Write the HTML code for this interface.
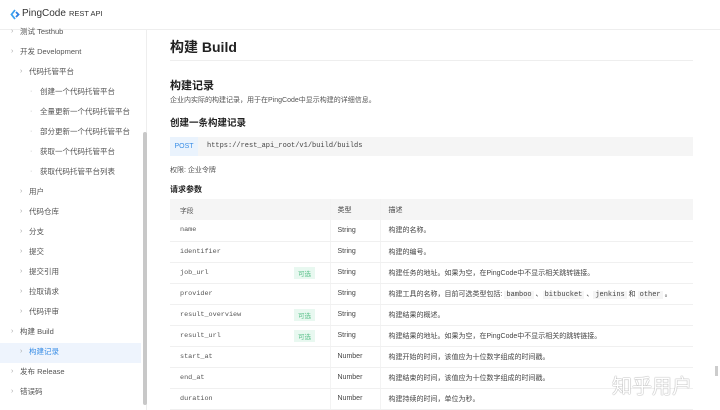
<!DOCTYPE html>
<html><head><meta charset="utf-8"><style>
*{margin:0;padding:0;box-sizing:border-box}
body{width:720px;height:410px;overflow:hidden;background:#fff;font-family:"Liberation Sans","Noto Sans CJK SC",sans-serif;color:#333;position:relative}
.hdr{position:absolute;left:0;top:0;width:720px;height:30px;border-bottom:1px solid #eee;background:#fff}
.side{position:absolute;left:0;top:30px;width:147px;height:380px;border-right:1px solid #eee}
.it{position:absolute;font-size:7.5px;color:#555;white-space:nowrap;line-height:20px;height:20px}
.it:before{content:"›";position:absolute;left:-9px;color:#aaa;font-size:7px}
.dot:before{content:"·";left:-10px}
.mono{font-family:"Liberation Mono",monospace}
.a{position:absolute;white-space:nowrap}
table{position:absolute;left:170px;top:199px;width:523px;border-collapse:collapse;font-size:7px}
td{height:21px;border-bottom:1px solid #f0f0f0;padding-left:10px;color:#444;white-space:nowrap;vertical-align:middle}
td+td{border-left:1px solid #f3f3f3}
tr:first-child td{background:#f5f5f5;height:21px;border-bottom:none}
tr td:first-child{font-family:"Liberation Mono",monospace;font-size:6.8px;color:#555;position:relative}
.opt{position:absolute;left:124px;top:4px;background:#e8f8f0;color:#5ac08a;font-size:6.5px;padding:1px 4px;font-family:"Noto Sans CJK SC",sans-serif}
code{font-family:"Liberation Mono",monospace;background:#f5f5f5;padding:0 2px;font-size:7px}
</style></head><body>
<div class="hdr">
<svg class="a" style="left:10px;top:9px" width="10" height="11" viewBox="0 0 10 11"><path d="M5 1L1.5 5.5 5 10" stroke="#3aa0f0" stroke-width="1.8" fill="none"/><path d="M6 3l2.5 2.5L6 8" stroke="#2d7fe0" stroke-width="1.8" fill="none"/></svg>
<div class="a" style="left:22px;top:8px;font-size:10px;color:#333">PingCode</div>
<div class="a" style="left:69px;top:9px;font-size:7.5px;color:#333">REST API</div>
</div>
<div class="side">
<div class="a" style="left:0;top:313px;width:141px;height:20px;background:#eef4fd"></div>
<div class="a" style="left:143px;top:102px;width:4px;height:273px;background:#c8c8c8;border-radius:2px"></div>
</div>
<div class="it" style="left:20px;top:22px">测试 Testhub</div>
<div class="it" style="left:20px;top:42px">开发 Development</div>
<div class="it" style="left:29px;top:62px">代码托管平台</div>
<div class="it dot" style="left:40px;top:82px">创建一个代码托管平台</div>
<div class="it dot" style="left:40px;top:102px">全量更新一个代码托管平台</div>
<div class="it dot" style="left:40px;top:122px">部分更新一个代码托管平台</div>
<div class="it dot" style="left:40px;top:142px">获取一个代码托管平台</div>
<div class="it dot" style="left:40px;top:162px">获取代码托管平台列表</div>
<div class="it" style="left:29px;top:182px">用户</div>
<div class="it" style="left:29px;top:202px">代码仓库</div>
<div class="it" style="left:29px;top:222px">分支</div>
<div class="it" style="left:29px;top:242px">提交</div>
<div class="it" style="left:29px;top:262px">提交引用</div>
<div class="it" style="left:29px;top:282px">拉取请求</div>
<div class="it" style="left:29px;top:302px">代码评审</div>
<div class="it" style="left:20px;top:322px">构建 Build</div>
<div class="it" style="left:29px;top:342px;color:#3a8ee6">构建记录</div>
<div class="it" style="left:20px;top:362px">发布 Release</div>
<div class="it" style="left:20px;top:382px">错误码</div>

<div class="a" style="left:170px;top:37px;font-size:14px;font-weight:bold;color:#222">构建 Build</div>
<div class="a" style="left:170px;top:60px;width:523px;border-top:1px solid #eee"></div>
<div class="a" style="left:170px;top:77px;font-size:11px;font-weight:bold;color:#222">构建记录</div>
<div class="a" style="left:170px;top:95px;font-size:7px;color:#555">企业内实际的构建记录，用于在PingCode中显示构建的详细信息。</div>
<div class="a" style="left:170px;top:115px;font-size:9.5px;font-weight:bold;color:#222">创建一条构建记录</div>
<div class="a" style="left:170px;top:137px;width:523px;height:19px;background:#f5f5f5"></div>
<div class="a" style="left:170px;top:137px;width:28px;height:19px;background:#eaf3fd;color:#3a8ee6;font-size:7px;line-height:19px;text-align:center">POST</div>
<div class="a mono" style="left:207px;top:137px;font-size:7px;line-height:19px;color:#444">https://rest_api_root/v1/build/builds</div>
<div class="a" style="left:170px;top:165px;font-size:7px;color:#555">权限: 企业令牌</div>
<div class="a" style="left:170px;top:184px;font-size:8px;font-weight:bold;color:#222">请求参数</div>
<table>
<tr><td style="width:160px;font-family:'Liberation Sans','Noto Sans CJK SC',sans-serif">字段</td><td style="width:50px;padding-left:7px">类型</td><td style="padding-left:8px">描述</td></tr>
<tr><td>name</td><td style="padding-left:7px">String</td><td style="padding-left:8px">构建的名称。</td></tr>
<tr><td>identifier</td><td style="padding-left:7px">String</td><td style="padding-left:8px">构建的编号。</td></tr>
<tr><td>job_url<span class="opt">可选</span></td><td style="padding-left:7px">String</td><td style="padding-left:8px">构建任务的地址。如果为空，在PingCode中不显示相关跳转链接。</td></tr>
<tr><td>provider</td><td style="padding-left:7px">String</td><td style="padding-left:8px">构建工具的名称，目前可选类型包括: <code>bamboo</code> 、<code>bitbucket</code> 、<code>jenkins</code> 和 <code>other</code> 。</td></tr>
<tr><td>result_overview<span class="opt">可选</span></td><td style="padding-left:7px">String</td><td style="padding-left:8px">构建结果的概述。</td></tr>
<tr><td>result_url<span class="opt">可选</span></td><td style="padding-left:7px">String</td><td style="padding-left:8px">构建结果的地址。如果为空，在PingCode中不显示相关的跳转链接。</td></tr>
<tr><td>start_at</td><td style="padding-left:7px">Number</td><td style="padding-left:8px">构建开始的时间，该值应为十位数字组成的时间戳。</td></tr>
<tr><td>end_at</td><td style="padding-left:7px">Number</td><td style="padding-left:8px">构建结束的时间，该值应为十位数字组成的时间戳。</td></tr>
<tr><td>duration</td><td style="padding-left:7px">Number</td><td style="padding-left:8px">构建持续的时间，单位为秒。</td></tr>
</table>
<div class="a" style="left:612px;top:370px;font-size:20px;color:#fff;text-shadow:0 0 1px #999,0 0 1px #999;font-family:'Noto Sans CJK SC',sans-serif">知乎用户</div>
<div class="a" style="left:715px;top:366px;width:3px;height:10px;background:#ccc"></div>
</body></html>
